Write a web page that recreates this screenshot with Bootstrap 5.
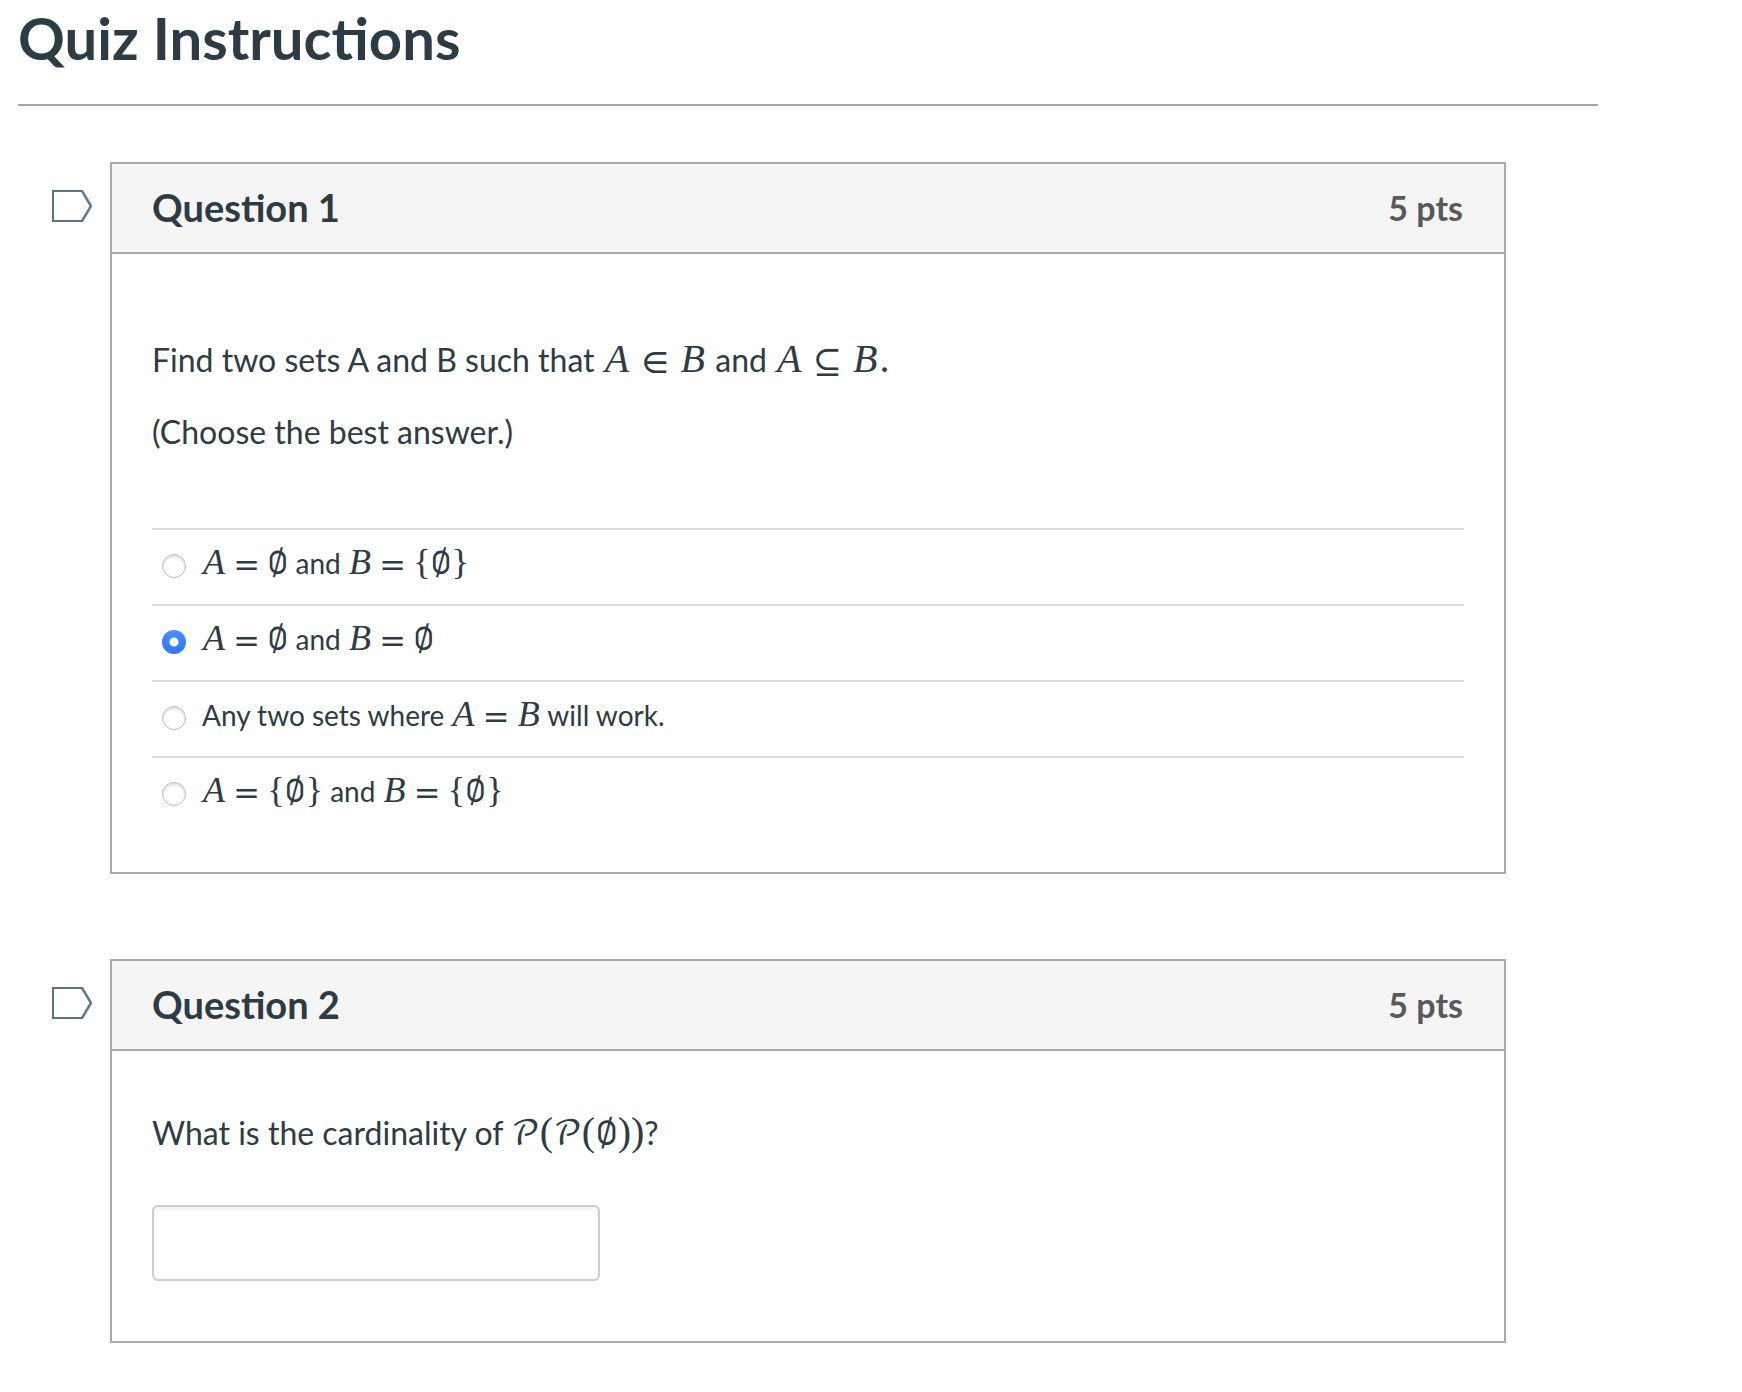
<!DOCTYPE html>
<html lang="en">
<head>
<meta charset="utf-8">
<meta name="viewport" content="width=device-width, initial-scale=1">
<title>Quiz Instructions</title>
<link href="https://cdn.jsdelivr.net/npm/bootstrap@5.3.0/dist/css/bootstrap.min.css" rel="stylesheet">
<style>
  body { font-family: Lato, sans-serif; font-size: 32px; line-height: 48px; color: #2d3b45; background: #fff; }
  .quiz-page { padding: 0 144px 48px 18px; }
  .quiz-title { font-size: 58px; line-height: 76px; font-weight: 700; padding-bottom: 28px; border-bottom: 2px solid #a5a5a5; margin-bottom: 56px; }
  .question { margin: 0 92px 85px 34px; }
  .flag-btn { width: 40px; height: 32px; margin: 28px 18px 0 0; }
  .question-card { border: 2px solid #aaa; border-radius: 0; color: inherit; }
  .question-head { background: #f5f5f5; border-bottom: 2px solid #aaa; border-radius: 0 !important; padding: 19px 41px 21px 40px; }
  .question-name { font-size: 38px; line-height: 48px; font-weight: 700; }
  .question-pts { font-size: 34px; line-height: 50px; height: 48px; font-weight: 700; color: #595959; }
  .question-body { padding: 82px 40px 40px; }
  .short-body { padding-top: 58px; padding-bottom: 60px; }
  .prompt { margin-bottom: 24px; }
  .answers { margin-top: 72px; font-size: 28px; }
  .answer-row { border-top: 2px solid #ddd; padding: 9px 0 17px 10px; gap: 16px; }
  .answer-row input.form-check-input { width: 24px; height: 24px; margin: 6px 0 0; border: 1px solid #bbb; box-shadow: inset 0 2px 3px #ddd; }
  .answer-row input.form-check-input:checked { border: 0; box-shadow: none; background: radial-gradient(circle, #fff 4px, transparent 5px), linear-gradient(#4a90fa, #2f74f6); }
  .formula { font-family: "Liberation Serif", serif; font-size: 40px; line-height: 1; white-space: nowrap; }
  .answers .formula { font-size: 36px; }
  .formula i { padding: 0 2px; }
  .answers .formula i { padding: 0 1px; }
  .rel, .sym { font-family: "DejaVu Math TeX Gyre", "DejaVu Serif", serif; font-size: 34px; line-height: 1; }
  .rel { padding: 0 10px; }
  .answers .rel { font-size: 32px; padding: 0 8px; }
  .answers .sym { font-size: 32px; }
  .number-box { width: 448px; max-width: 100%; height: 76px; border: 2px solid #ccc; border-radius: 6px; box-shadow: inset 0 2px 3px #eee; font-size: 32px; margin-top: 48px; }
</style>
<script src="https://cdn.jsdelivr.net/npm/bootstrap@5.3.0/dist/js/bootstrap.bundle.min.js"></script>
</head>
<body>
<main class="quiz-page">
  <h1 class="quiz-title">Quiz Instructions</h1>

  <section class="question d-flex align-items-start">
    <button type="button" class="flag-btn btn p-0 border-0 d-flex" aria-label="Flag question 1">
      <svg width="40" height="32" viewBox="0 0 40 32" fill="none" stroke="#5b7388" stroke-width="2"><path d="M1 1H30L39 16L30 31H1Z"/><path d="M30 1L39 16L30 31" stroke-width="3" stroke-opacity=".5"/></svg>
    </button>
    <div class="question-card card flex-grow-1">
      <div class="question-head card-header d-flex justify-content-between">
        <h2 class="question-name mb-0">Question 1</h2>
        <span class="question-pts">5 pts</span>
      </div>
      <div class="question-body card-body">
        <p class="prompt">Find two sets A and B such that <span class="formula"><i>A</i><span class="rel">∈</span><i>B</i></span> and <span class="formula"><i>A</i><span class="rel">⊆</span><i>B</i>.</span></p>
        <p class="prompt">(Choose the best answer.)</p>
        <div class="answers">
          <div class="answer-row d-flex align-items-center">
            <input class="form-check-input" type="radio" name="q1" id="q1a">
            <label for="q1a"><span class="formula"><i>A</i><span class="rel">=</span><span class="sym">∅</span></span> and <span class="formula"><i>B</i><span class="rel">=</span>{<span class="sym">∅</span>}</span></label>
          </div>
          <div class="answer-row d-flex align-items-center">
            <input class="form-check-input" type="radio" name="q1" id="q1b" checked>
            <label for="q1b"><span class="formula"><i>A</i><span class="rel">=</span><span class="sym">∅</span></span> and <span class="formula"><i>B</i><span class="rel">=</span><span class="sym">∅</span></span></label>
          </div>
          <div class="answer-row d-flex align-items-center">
            <input class="form-check-input" type="radio" name="q1" id="q1c">
            <label for="q1c">Any two sets where <span class="formula"><i>A</i><span class="rel">=</span><i>B</i></span> will work.</label>
          </div>
          <div class="answer-row d-flex align-items-center">
            <input class="form-check-input" type="radio" name="q1" id="q1d">
            <label for="q1d"><span class="formula"><i>A</i><span class="rel">=</span>{<span class="sym">∅</span>}</span> and <span class="formula"><i>B</i><span class="rel">=</span>{<span class="sym">∅</span>}</span></label>
          </div>
        </div>
      </div>
    </div>
  </section>

  <section class="question d-flex align-items-start mb-0">
    <button type="button" class="flag-btn btn p-0 border-0 d-flex" aria-label="Flag question 2">
      <svg width="40" height="32" viewBox="0 0 40 32" fill="none" stroke="#5b7388" stroke-width="2"><path d="M1 1H30L39 16L30 31H1Z"/><path d="M30 1L39 16L30 31" stroke-width="3" stroke-opacity=".5"/></svg>
    </button>
    <div class="question-card card flex-grow-1">
      <div class="question-head card-header d-flex justify-content-between">
        <h2 class="question-name mb-0">Question 2</h2>
        <span class="question-pts">5 pts</span>
      </div>
      <div class="question-body short-body card-body">
        <label class="d-block" for="q2">What is the cardinality of <span class="formula"><span class="sym">𝒫</span>(<span class="sym">𝒫</span>(<span class="sym">∅</span>))</span>?</label>
        <input class="number-box form-control" type="text" id="q2">
      </div>
    </div>
  </section>
</main>
</body>
</html>
